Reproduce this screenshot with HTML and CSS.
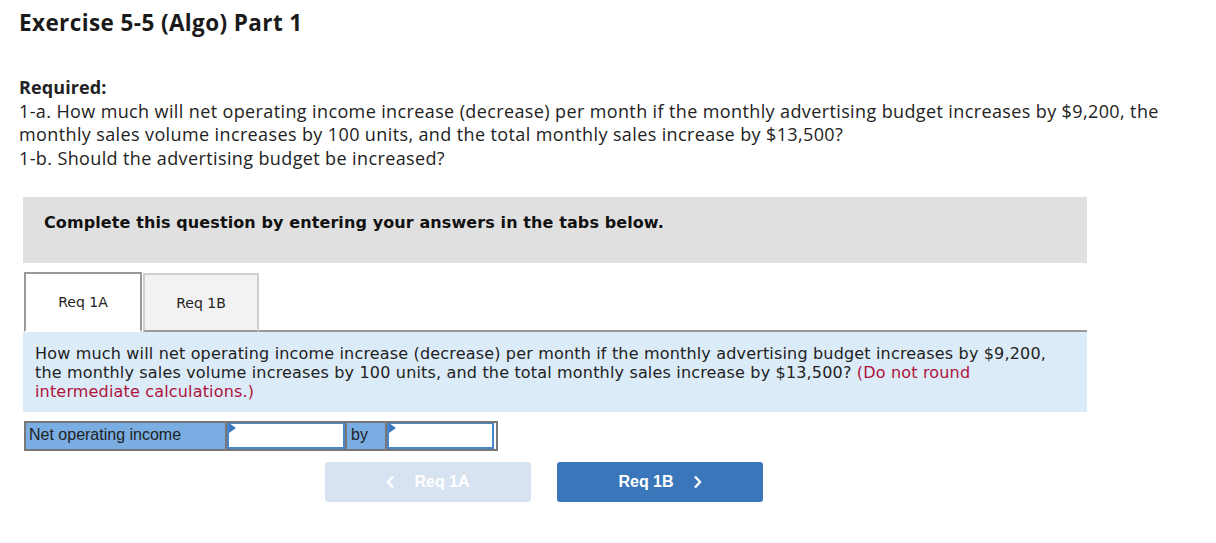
FILE: index.html
```html
<!DOCTYPE html>
<html>
<head>
<meta charset="utf-8">
<link rel="stylesheet" href="styles.css">
</head>
<body>
<div class="page">
  <h1 class="title">Exercise 5-5 (Algo) Part 1</h1>
  <div class="required">
    <div class="req-label">Required:</div>
    <div>1-a. How much will net operating income increase (decrease) per month if the monthly advertising budget increases by $9,200, the monthly sales volume increases by 100 units, and the total monthly sales increase by $13,500?</div>
    <div>1-b. Should the advertising budget be increased?</div>
  </div>
  <div class="instructions">Complete this question by entering your answers in the tabs below.</div>
  <div class="tabs">
    <div class="tab active">Req 1A</div>
    <div class="tab">Req 1B</div>
    <div class="tab-fill"></div>
  </div>
  <div class="question">How much will net operating income increase (decrease) per month if the monthly advertising budget increases by $9,200, the monthly sales volume increases by 100 units, and the total monthly sales increase by $13,500? <span class="note">(Do not round intermediate calculations.)</span></div>
  <div class="answer-row">
    <div class="cell label">Net operating income</div>
    <div class="cell input w1"><span class="flag"></span></div>
    <div class="cell by">by</div>
    <div class="cell input w2"><span class="flag"></span></div>
  </div>
  <div class="nav">
    <div class="btn prev"><svg class="chev l" width="9" height="14" viewBox="0 0 9 14"><path d="M7 1.5 L2 7 L7 12.5" fill="none" stroke="#fff" stroke-width="2.4"/></svg>Req 1A</div>
    <div class="btn next">Req 1B<svg class="chev r" width="9" height="14" viewBox="0 0 9 14"><path d="M2 1.5 L7 7 L2 12.5" fill="none" stroke="#fff" stroke-width="2.4"/></svg></div>
  </div>
</div>
</body>
</html>
```

FILE: styles.css
```css
html, body {
  margin: 0;
  padding: 0;
  background: #fff;
}
.page {
  padding: 8px 0 0 19px;
  font-family: "Open Sans", "Lato", sans-serif;
  color: #222;
}
.title {
  font-size: 22.5px;
  font-weight: 700;
  margin: 0;
  line-height: 30px;
  color: #1a1a1a;
  letter-spacing: 0.4px;
}
.required {
  margin-top: 38px;
  font-size: 18px;
  line-height: 23.5px;
  color: #222;
  width: 1150px;
  letter-spacing: 0.38px;
}
.req-label {
  font-weight: 700;
  letter-spacing: 0.1px;
}
.instructions {
  margin: 27px 0 0 4px;
  height: 66px;
  box-sizing: border-box;
  padding: 16px 21px 0;
  background: #e0e0e0;
  font-family: "DejaVu Sans", Verdana, sans-serif;
  font-weight: 700;
  font-size: 16px;
  letter-spacing: 0.1px;
  color: #111;
  width: 1064px;
}
.tabs {
  display: flex;
  margin: 9px 0 0 5px;
  height: 60px;
  align-items: flex-end;
  width: 1063px;
}
.tab {
  box-sizing: border-box;
  height: 59px;
  display: flex;
  align-items: center;
  justify-content: center;
  font-family: "DejaVu Sans", Verdana, sans-serif;
  font-size: 14px;
  color: #222;
  background: #f2f2f2;
  border: 2px solid #cfcfcf;
  border-bottom: 2px solid #999;
  width: 116px;
  margin-left: 1px;
}
.tab.active {
  background: #fff;
  border: 2px solid #999;
  border-bottom: 2px solid #fff;
  height: 60px;
  width: 118px;
  margin-left: 0;
}
.tab-fill {
  flex: 1;
  border-bottom: 2px solid #999;
}
.question {
  margin-left: 4px;
  width: 1064px;
  box-sizing: border-box;
  background: #dbebf8;
  padding: 12px 30px 10px 12px;
  height: 80px;
  font-family: "DejaVu Sans", Verdana, sans-serif;
  font-size: 16px;
  letter-spacing: 0.17px;
  line-height: 19px;
  color: #222;
}
.note {
  color: #b0123b;
}
.answer-row {
  display: flex;
  margin: 9px 0 0 5px;
  width: 474px;
  height: 30px;
  box-sizing: border-box;
  border: 2px solid #777;
  font-family: "Liberation Sans", Arial, sans-serif;
  font-size: 16px;
  color: #222;
}
.cell {
  box-sizing: border-box;
  height: 100%;
}
.label {
  background: #7aaee3;
  width: 201px;
  padding: 3px 0 0 3px;
  border-right: 2px solid #777;
}
.by {
  background: #7aaee3;
  width: 42px;
  padding: 3px 0 0 4px;
  border-left: 2px solid #777;
  border-right: 2px solid #777;
}
.input {
  position: relative;
  background: #fff;
  border: 2px solid #4a86cc;
  border-top-width: 1px;
}
.w1 { width: 118px; }
.w2 { width: 107px; }
.flag {
  position: absolute;
  left: 0;
  top: -1px;
  width: 0;
  height: 0;
  border-top: 5px solid transparent;
  border-bottom: 5px solid transparent;
  border-left: 7px solid #3c78c0;
}
.nav {
  display: flex;
  gap: 26px;
  margin: 11px 0 0 306px;
}
.btn {
  width: 206px;
  height: 40px;
  border-radius: 3px;
  display: flex;
  align-items: center;
  justify-content: center;
  font-family: "Liberation Sans", Arial, sans-serif;
  font-weight: 700;
  font-size: 16px;
  color: #fff;
}
.prev {
  background: #d7e3f1;
}
.next {
  background: #3a77ba;
}
.chev.l {
  margin-right: 19px;
}
.chev.r {
  margin-left: 19px;
}
```
